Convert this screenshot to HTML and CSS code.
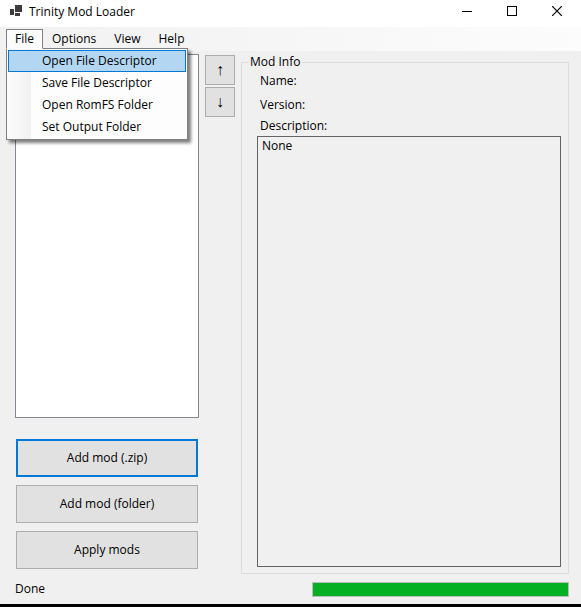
FILE: index.html
```html
<!DOCTYPE html>
<html lang="en">
<head>
<meta charset="utf-8">
<title>Trinity Mod Loader</title>
<link rel="stylesheet" href="styles.css">
</head>
<body>
<header class="titlebar">
  <svg class="app-icon" width="12" height="11" viewBox="0 0 12 11" fill="#3c3c3e" shape-rendering="crispEdges" aria-hidden="true">
    <rect x="0" y="4" width="4" height="6"/>
    <rect x="5" y="0" width="7" height="7"/>
    <rect x="5" y="8" width="5" height="3"/>
  </svg>
  <h1 class="title">Trinity Mod Loader</h1>
  <div class="window-controls">
    <button class="window-button" type="button" aria-label="Minimize"><svg width="10" height="10" viewBox="0 0 10 10" shape-rendering="crispEdges"><path d="M0 5.5H10" stroke="#000"/></svg></button>
    <button class="window-button" type="button" aria-label="Maximize"><svg width="10" height="10" viewBox="0 0 10 10" shape-rendering="crispEdges"><path d="M.5 .5H9.5V9.5H.5Z" fill="none" stroke="#000"/></svg></button>
    <button class="window-button" type="button" aria-label="Close"><svg width="10" height="10" viewBox="0 0 10 10"><path d="M0 0L10 10M10 0L0 10" stroke="#000" stroke-width="1.2"/></svg></button>
  </div>
</header>
<nav class="menubar">
  <div class="menu">
    <button class="menu-title open" type="button">File</button>
    <div class="dropdown">
      <button class="menu-item selected" type="button">Open File Descriptor</button>
      <button class="menu-item" type="button">Save File Descriptor</button>
      <button class="menu-item" type="button">Open RomFS Folder</button>
      <button class="menu-item" type="button">Set Output Folder</button>
    </div>
  </div>
  <button class="menu-title" type="button">Options</button>
  <button class="menu-title" type="button">View</button>
  <button class="menu-title" type="button">Help</button>
</nav>
<main class="content">
  <section class="mods">
    <select class="mod-list" size="10" aria-label="Mods"></select>
    <div class="actions">
      <button class="button action default" type="button">Add mod (.zip)</button>
      <button class="button action" type="button">Add mod (folder)</button>
      <button class="button action" type="button">Apply mods</button>
    </div>
  </section>
  <div class="order">
    <button class="button arrow" type="button" aria-label="Move up">↑</button>
    <button class="button arrow" type="button" aria-label="Move down">↓</button>
  </div>
  <fieldset class="info">
    <legend class="info-title">Mod Info</legend>
    <div class="info-body">
      <p class="field">Name:</p>
      <p class="field version">Version:</p>
      <label class="field" for="description">Description:</label>
      <textarea class="description" id="description" readonly>None</textarea>
    </div>
  </fieldset>
</main>
<footer class="statusbar">
  <span class="status">Done</span>
  <div class="progress" role="progressbar" aria-label="Progress" aria-valuenow="100"><div class="progress-fill" style="width: 100%"></div></div>
</footer>
</body>
</html>
```
FILE: styles.css
```css
* {
  box-sizing: border-box;
}

body {
  display: flex;
  flex-direction: column;
  height: 100vh;
  margin: 0;
  border-bottom: 3px solid #000;
  background: #f0f0f0;
  color: #000;
  font: 12px/16px "Open Sans", "Noto Sans", sans-serif;
}

button,
select,
textarea {
  margin: 0;
  border-radius: 0;
  color: inherit;
  font: inherit;
}

.titlebar {
  display: flex;
  flex: none;
  height: 27px;
  padding: 0 2px 0 10px;
  background: #fff;
}

.app-icon {
  margin-top: 5px;
}

.title {
  flex: 1;
  margin: 4px 0 0 7px;
  font-size: 12px;
  font-weight: 400;
}

.window-controls {
  display: flex;
}

.window-button {
  display: flex;
  align-items: center;
  justify-content: center;
  width: 45px;
  height: 22px;
  padding: 0;
  border: 0;
  background: none;
}

.menubar {
  display: flex;
  flex: none;
  height: 24px;
  padding: 2px 6px;
  background: linear-gradient(to right, #f1f1f1, #fcfcfc);
}

.menu {
  position: relative;
}

.menu-title {
  height: 20px;
  padding: 0 8px;
  border: 1px solid transparent;
  background: none;
}

.menu-title.open {
  position: relative;
  z-index: 2;
  border-color: #808080;
  border-bottom-color: #fcfcfc;
  background: #fcfcfc;
}

.dropdown {
  position: absolute;
  z-index: 1;
  top: 19px;
  left: 0;
  width: 182px;
  padding: 1px;
  border: 1px solid #808080;
  background: linear-gradient(to right, #fcfcfc, #f1f1f1) 0 0 / 24px 100% no-repeat #fdfdfd;
  box-shadow: 3px 3px 3px rgba(0, 0, 0, 0.5);
}

.menu-item {
  display: block;
  width: 100%;
  height: 22px;
  padding: 0 0 0 33px;
  border: 1px solid transparent;
  background: none;
  text-align: left;
}

.menu-item.selected {
  border-color: #0078d7;
  background: #b3d7f3;
}

.content {
  display: grid;
  flex: 1;
  grid-template-columns: 184px 30px minmax(0, 1fr);
  gap: 6px;
  min-height: 0;
  padding: 3px 12px 0 15px;
}

.mods {
  display: flex;
  flex-direction: column;
  gap: 21px;
  padding-bottom: 5px;
}

.mod-list {
  flex: 1;
  border: 1px solid #828790;
  background: #fff;
}

.actions {
  display: flex;
  flex-direction: column;
  gap: 8px;
  padding: 0 1px;
}

.button {
  border: 1px solid #adadad;
  background: #e1e1e1;
}

.action {
  height: 38px;
}

.default {
  border: 2px solid #0078d7;
}

.order {
  display: flex;
  flex-direction: column;
  gap: 2px;
  padding-top: 1px;
}

.arrow {
  height: 30px;
  padding: 0;
  font: 16px/16px "Liberation Sans", sans-serif;
}

.info {
  display: flex;
  min-width: 0;
  margin: 0;
  padding: 3px 7px 6px;
  border: 1px solid #dcdcdc;
}

.info-title {
  padding: 0 2px 0 1px;
}

.info-body {
  display: flex;
  flex: 1;
  flex-direction: column;
  padding-left: 8px;
}

.field {
  margin: 0 0 0 3px;
}

.version {
  margin-top: 8px;
  margin-bottom: 5px;
}

.description {
  flex: 1;
  width: 100%;
  margin-top: 2px;
  padding: 1px 4px;
  border: 1px solid #646464;
  outline: 0;
  background: #f0f0f0;
  resize: none;
}

.statusbar {
  display: grid;
  flex: none;
  grid-template-columns: 297px minmax(0, 1fr);
  align-items: center;
  height: 30px;
  padding: 0 12px 0 15px;
}

.progress {
  height: 15px;
  border: 1px solid #bcbcbc;
}

.progress-fill {
  height: 100%;
  background: #06b025;
}
```
